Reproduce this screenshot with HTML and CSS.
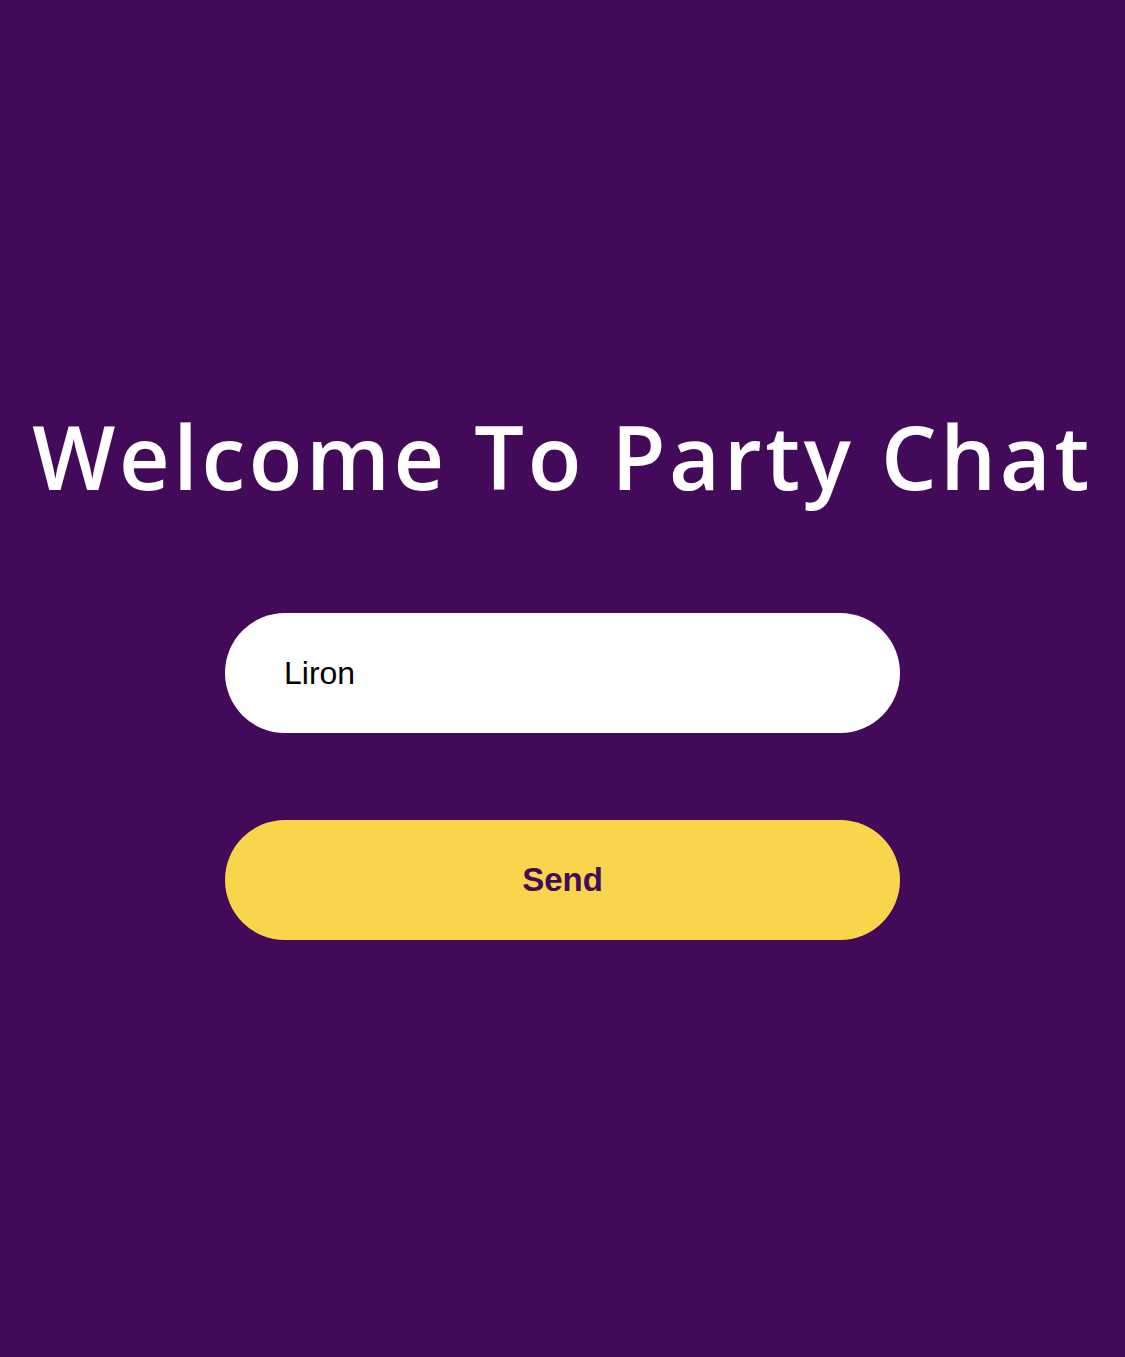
FILE: index.html
```html
<!DOCTYPE html>
<html>
<head>
<meta charset="utf-8">
<link rel="stylesheet" href="styles.css">
</head>
<body>
<main class="page">
  <h1 class="title">Welcome To Party Chat</h1>
  <form class="form">
    <div class="field">Liron</div>
    <button type="button" class="send">Send</button>
  </form>
</main>
</body>
</html>
```
FILE: styles.css
```css
html, body {
  margin: 0;
  padding: 0;
}
body {
  background: #420a58;
  min-height: 1357px;
}
.page {
  min-height: 1357px;
  box-sizing: border-box;
  padding-bottom: 21px;
  display: flex;
  flex-direction: column;
  align-items: center;
  justify-content: center;
}
.title {
  margin: 0 0 97px 0;
  font-family: "Open Sans", sans-serif;
  font-weight: 600;
  font-size: 88px;
  line-height: 120px;
  letter-spacing: 3.6px;
  color: #ffffff;
  white-space: nowrap;
}
.form {
  display: flex;
  flex-direction: column;
  gap: 87px;
  width: 675px;
}
.field {
  height: 120px;
  border-radius: 60px;
  background: #ffffff;
  display: flex;
  align-items: center;
  padding-left: 59px;
  box-sizing: border-box;
  font-family: "Liberation Sans", Arial, sans-serif;
  font-size: 32px;
  color: #000000;
}
.send {
  height: 120px;
  border: none;
  border-radius: 60px;
  background: #f8d54a;
  font-family: "Liberation Sans", Arial, sans-serif;
  font-weight: bold;
  font-size: 33px;
  color: #420a58;
  padding: 0;
}
```
